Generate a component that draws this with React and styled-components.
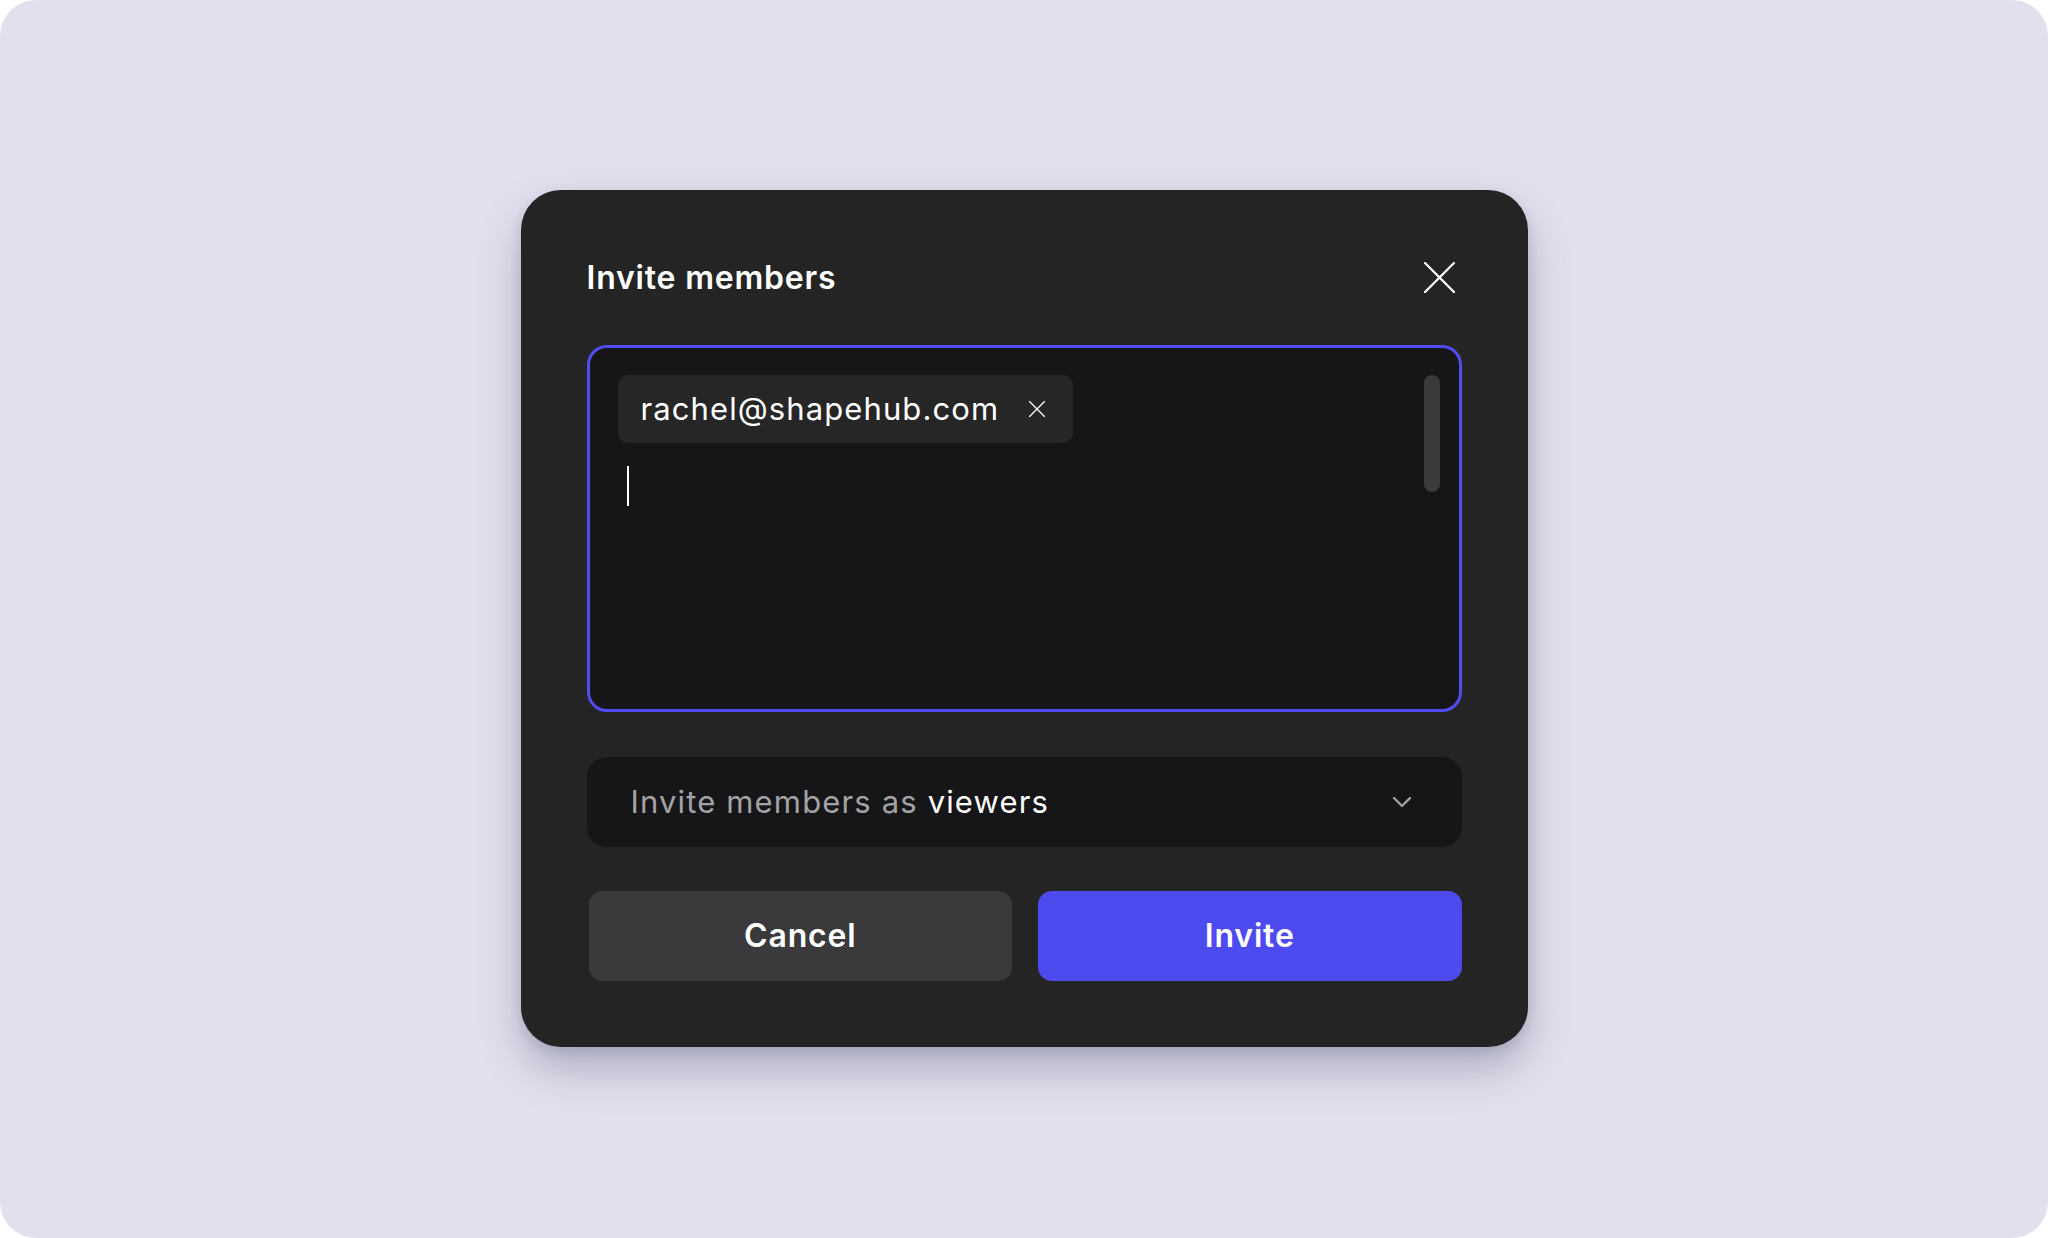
import React from "react";
import styled, {createGlobalStyle} from "styled-components";

const GlobalStyle = createGlobalStyle`
  html, body {
    margin: 0;
    padding: 0;
    background: #ffffff;
  }
  * {
    box-sizing: border-box;
  }
  body {
    font-family: Inter, "Noto Sans", sans-serif;
  }
`;

const CloseIcon = ({size = 30, stroke = 2}) => (
  <svg width={size} height={size} viewBox="0 0 30 30" fill="none">
    <path d="M1 1L29 29M29 1L1 29" stroke="#ffffff" strokeWidth={stroke} strokeLinecap="round" />
  </svg>
);

const ChevronIcon = () => (
  <svg width="20" height="12" viewBox="0 0 20 12" fill="none">
    <path d="M2 2L10 10L18 2" stroke="#a3a3a6" strokeWidth="2.4" strokeLinecap="round" strokeLinejoin="round" />
  </svg>
);

const App = () => {
  return (
    <Page>
      <GlobalStyle />
      <Modal>
        <Header>
          <Title>Invite members</Title>
          <IconButton aria-label="Close">
            <CloseIcon size={31} stroke={2.2} />
          </IconButton>
        </Header>

        <EmailField>
          <Chip>
            <ChipLabel>rachel@shapehub.com</ChipLabel>
            <ChipRemove aria-label="Remove">
              <CloseIcon size={16} stroke={2.4} />
            </ChipRemove>
          </Chip>
          <CaretLine>
            <Caret />
          </CaretLine>
          <Scrollbar />
        </EmailField>

        <RoleSelect>
          <RoleText>
            Invite members as <strong>viewers</strong>
          </RoleText>
          <ChevronIcon />
        </RoleSelect>

        <Actions>
          <ActionButton>Cancel</ActionButton>
          <ActionButton primary>Invite</ActionButton>
        </Actions>
      </Modal>
    </Page>
  );
};

const Page = styled.div`
  width: 100vw;
  height: 100vh;
  background: #e1e1ee;
  border-radius: 36px;
  display: flex;
  align-items: center;
  justify-content: center;
  overflow: hidden;
`;

const Modal = styled.div`
  width: 1007px;
  padding: 66px;
  background: #242424;
  border-radius: 40px;
  display: flex;
  flex-direction: column;
  box-shadow: 0 22px 44px rgba(40, 40, 80, 0.28), 0 4px 12px rgba(40, 40, 80, 0.12);
  transform: translateY(-1px);
`;

const Header = styled.div`
  height: 44px;
  display: flex;
  align-items: center;
  justify-content: space-between;
  margin-bottom: 45px;
`;

const Title = styled.h2`
  margin: 0;
  font-size: 32px;
  line-height: 44px;
  font-weight: 600;
  color: #ffffff;
  letter-spacing: 0.8px;
`;

const IconButton = styled.button`
  width: 44px;
  height: 44px;
  padding: 0;
  border: none;
  background: transparent;
  display: flex;
  align-items: center;
  justify-content: center;
  cursor: pointer;
`;

const EmailField = styled.div`
  position: relative;
  height: 367px;
  padding: 27px 28px;
  background: #161618;
  border: 3px solid #4f4cf0;
  border-radius: 20px;
  display: flex;
  flex-direction: column;
  align-items: flex-start;
`;

const Chip = styled.div`
  height: 68px;
  padding: 0 28px 0 23px;
  background: #262627;
  border-radius: 10px;
  display: flex;
  align-items: center;
  gap: 30px;
`;

const ChipLabel = styled.span`
  font-size: 31px;
  letter-spacing: 1.1px;
  color: #ffffff;
  white-space: nowrap;
`;

const ChipRemove = styled.button`
  width: 16px;
  height: 16px;
  padding: 0;
  border: none;
  background: transparent;
  display: flex;
  cursor: pointer;
`;

const CaretLine = styled.div`
  margin-top: 23px;
  padding-left: 9px;
  height: 40px;
  display: flex;
`;

const Caret = styled.span`
  width: 2px;
  height: 40px;
  background: #ffffff;
`;

const Scrollbar = styled.div`
  position: absolute;
  top: 27px;
  right: 19px;
  width: 16px;
  height: 117px;
  border-radius: 8px;
  background: #3a3a3c;
`;

const RoleSelect = styled.div`
  margin-top: 45px;
  height: 90px;
  padding: 0 50px 0 44px;
  background: #161618;
  border-radius: 20px;
  display: flex;
  align-items: center;
  justify-content: space-between;
  cursor: pointer;
`;

const RoleText = styled.span`
  font-size: 31px;
  letter-spacing: 1.15px;
  color: #a3a3a6;
  strong {
    font-weight: 400;
    color: #ffffff;
  }
`;

const Actions = styled.div`
  margin-top: 44px;
  padding-left: 2px;
  display: grid;
  grid-template-columns: 1fr 1fr;
  gap: 26px;
`;

const ActionButton = styled.button`
  height: 90px;
  border: none;
  border-radius: 14px;
  font-family: Inter, "Noto Sans", sans-serif;
  font-size: 32px;
  font-weight: 600;
  letter-spacing: 0.8px;
  color: #ffffff;
  background: ${props => props.primary ? "#4d4bf0" : "#3a3a3c"};
  cursor: pointer;
`;

export default App;
